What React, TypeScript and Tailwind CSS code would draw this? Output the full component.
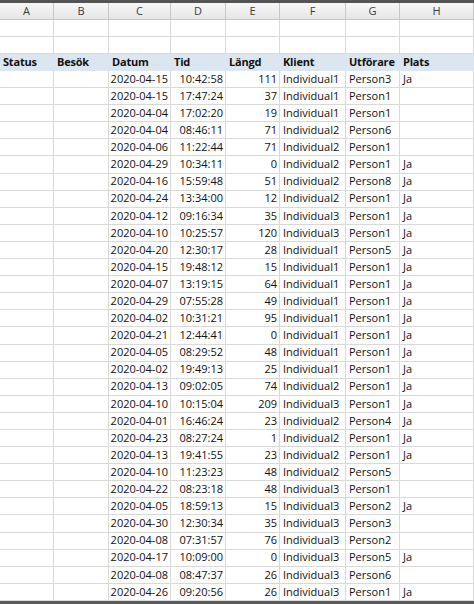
import React from "react";

const rows: [string, string, string, string, string, string][] = [
  ["2020-04-15", "10:42:58", "111", "Individual1", "Person3", "Ja"],
  ["2020-04-15", "17:47:24", "37", "Individual1", "Person1", ""],
  ["2020-04-04", "17:02:20", "19", "Individual1", "Person1", ""],
  ["2020-04-04", "08:46:11", "71", "Individual2", "Person6", ""],
  ["2020-04-06", "11:22:44", "71", "Individual2", "Person1", ""],
  ["2020-04-29", "10:34:11", "0", "Individual2", "Person1", "Ja"],
  ["2020-04-16", "15:59:48", "51", "Individual2", "Person8", "Ja"],
  ["2020-04-24", "13:34:00", "12", "Individual2", "Person1", "Ja"],
  ["2020-04-12", "09:16:34", "35", "Individual3", "Person1", "Ja"],
  ["2020-04-10", "10:25:57", "120", "Individual3", "Person1", "Ja"],
  ["2020-04-20", "12:30:17", "28", "Individual1", "Person5", "Ja"],
  ["2020-04-15", "19:48:12", "15", "Individual1", "Person1", "Ja"],
  ["2020-04-07", "13:19:15", "64", "Individual1", "Person1", "Ja"],
  ["2020-04-29", "07:55:28", "49", "Individual1", "Person1", "Ja"],
  ["2020-04-02", "10:31:21", "95", "Individual1", "Person1", "Ja"],
  ["2020-04-21", "12:44:41", "0", "Individual1", "Person1", "Ja"],
  ["2020-04-05", "08:29:52", "48", "Individual1", "Person1", "Ja"],
  ["2020-04-02", "19:49:13", "25", "Individual1", "Person1", "Ja"],
  ["2020-04-13", "09:02:05", "74", "Individual2", "Person1", "Ja"],
  ["2020-04-10", "10:15:04", "209", "Individual3", "Person1", "Ja"],
  ["2020-04-01", "16:46:24", "23", "Individual2", "Person4", "Ja"],
  ["2020-04-23", "08:27:24", "1", "Individual2", "Person1", "Ja"],
  ["2020-04-13", "19:41:55", "23", "Individual2", "Person1", "Ja"],
  ["2020-04-10", "11:23:23", "48", "Individual2", "Person5", ""],
  ["2020-04-22", "08:23:18", "48", "Individual3", "Person1", ""],
  ["2020-04-05", "18:59:13", "15", "Individual3", "Person2", "Ja"],
  ["2020-04-30", "12:30:34", "35", "Individual3", "Person3", ""],
  ["2020-04-08", "07:31:57", "76", "Individual3", "Person2", ""],
  ["2020-04-17", "10:09:00", "0", "Individual3", "Person5", "Ja"],
  ["2020-04-08", "08:47:37", "26", "Individual3", "Person6", ""],
  ["2020-04-26", "09:20:56", "26", "Individual3", "Person1", "Ja"],
];

const cols = ["A", "B", "C", "D", "E", "F", "G", "H"];
const headers = ["Status", "Besök", "Datum", "Tid", "Längd", "Klient", "Utförare", "Plats"];

const gridCls = "grid grid-cols-[54px_55px_62px_55px_54px_66px_54px_1fr]";
const cell = "h-[17px] border-r border-b border-[#d9d9d9] pl-[3px] pr-[2px] flex items-center whitespace-nowrap overflow-hidden";
const dcell = "h-[17.1px] border-r border-b border-[#d9d9d9] pl-[3px] pr-[2px] flex items-center whitespace-nowrap overflow-hidden";

export default function App() {
  return (
    <div
      className="w-[474px] h-[604px] overflow-hidden bg-white text-[#111111]"
      style={{ fontFamily: "'Open Sans', sans-serif", fontSize: "11px" }}
    >
      <div className="h-[3px] bg-[#545454]" />
      <div className={gridCls}>
        {cols.map((c) => (
          <div
            key={c}
            className="h-[17px] border-r border-b border-[#c6c6c6] bg-gradient-to-b from-[#f7f7f7] to-[#e6e6e6] flex items-center justify-center text-[#3c3c3c]"
          >
            {c}
          </div>
        ))}
        {[0, 1].map((r) =>
          cols.map((c) => <div key={`e${r}${c}`} className={cell} />)
        )}
        {headers.map((h, i) => (
          <div
            key={h}
            className={`h-[17px] border-b border-[#dce6f1] bg-[#dce6f1] pl-[3px] flex items-center font-bold tracking-[-0.2px] whitespace-nowrap ${i === 0 ? "pl-[2px]" : ""}`}
          >
            {h}
          </div>
        ))}
        {rows.map((r, i) => (
          <React.Fragment key={i}>
            <div className={dcell} />
            <div className={dcell} />
            <div className={`${dcell} justify-end`}>{r[0]}</div>
            <div className={`${dcell} justify-end`}>{r[1]}</div>
            <div className={`${dcell} justify-end`}>{r[2]}</div>
            <div className={dcell}>{r[3]}</div>
            <div className={dcell}>{r[4]}</div>
            <div className={dcell}>{r[5]}</div>
          </React.Fragment>
        ))}
      </div>
      <div className="h-[6px] bg-[#595959]" />
    </div>
  );
}
